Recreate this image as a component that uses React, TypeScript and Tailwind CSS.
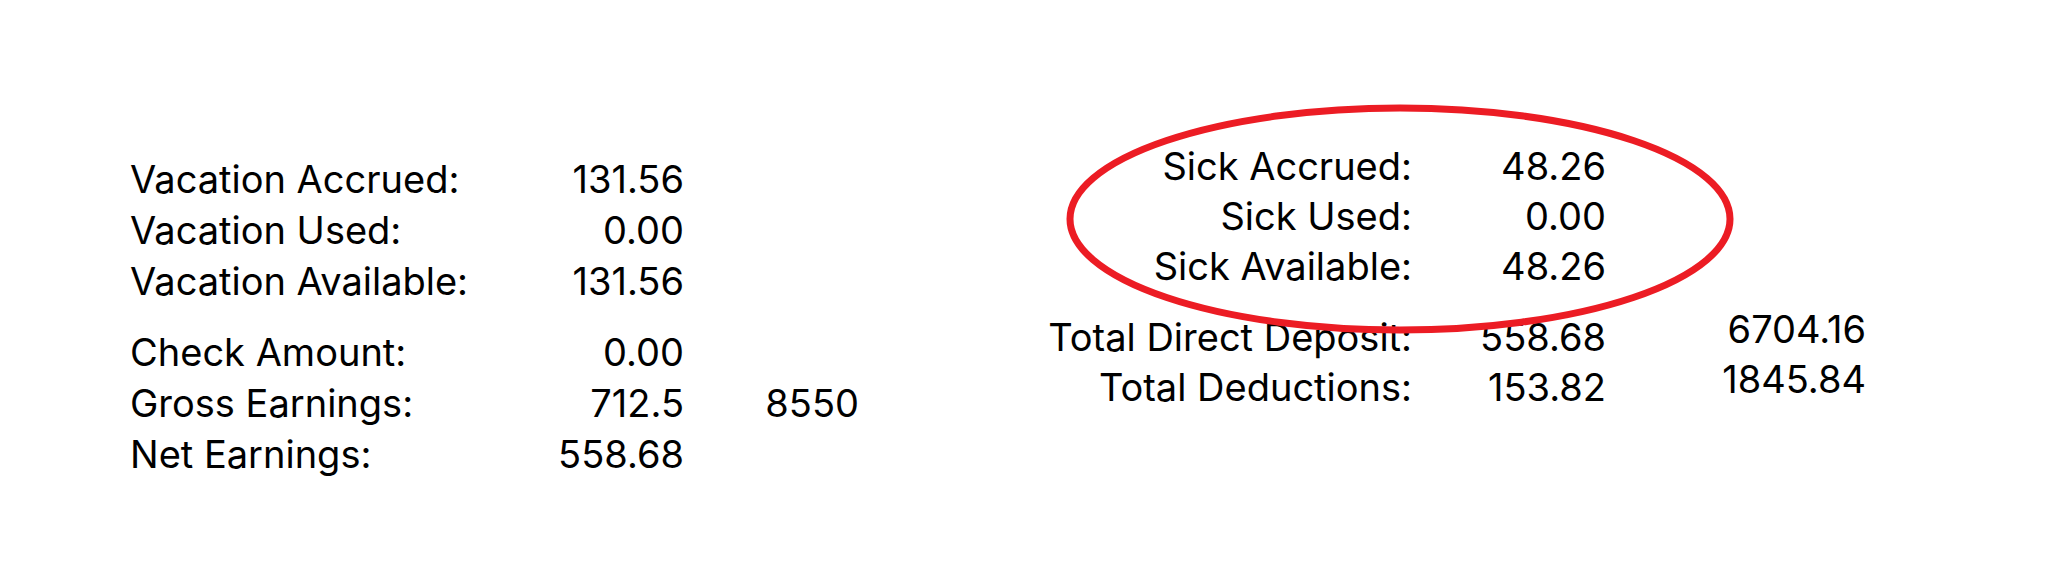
const vacation = [
  { label: 'Vacation Accrued:', value: '131.56' },
  { label: 'Vacation Used:', value: '0.00' },
  { label: 'Vacation Available:', value: '131.56' },
];

const earnings = [
  { label: 'Check Amount:', value: '0.00', ytd: '' },
  { label: 'Gross Earnings:', value: '712.5', ytd: '8550' },
  { label: 'Net Earnings:', value: '558.68', ytd: '' },
];

const sick = [
  { label: 'Sick Accrued:', value: '48.26' },
  { label: 'Sick Used:', value: '0.00' },
  { label: 'Sick Available:', value: '48.26' },
];

const totals = [
  { label: 'Total Direct Deposit:', value: '558.68', ytd: '6704.16' },
  { label: 'Total Deductions:', value: '153.82', ytd: '1845.84' },
];

export default function App() {
  return (
    <div
      className="relative w-[2048px] h-[583px] bg-white text-black text-[38px] overflow-hidden"
      style={{ fontFamily: 'Inter, "Liberation Sans", sans-serif' }}
    >
      <div className="flex">
        {/* left side */}
        <div className="pl-[130px] pt-[154px] flex flex-col leading-[51px]">
          {vacation.map((r) => (
            <div key={r.label} className="flex">
              <div className="w-[370px]">{r.label}</div>
              <div className="w-[184px] text-right">{r.value}</div>
            </div>
          ))}
          <div className="h-[20px]" />
          {earnings.map((r) => (
            <div key={r.label} className="flex">
              <div className="w-[370px]">{r.label}</div>
              <div className="w-[184px] text-right">{r.value}</div>
              <div className="w-[175px] text-right">{r.ytd}</div>
            </div>
          ))}
        </div>

        {/* right side */}
        <div className="ml-[171px] pt-[141px] flex flex-col leading-[50px]">
          {sick.map((r) => (
            <div key={r.label} className="flex">
              <div className="w-[382px] text-right">{r.label}</div>
              <div className="w-[194px] text-right">{r.value}</div>
            </div>
          ))}
          <div className="h-[21px]" />
          {totals.map((r) => (
            <div key={r.label} className="flex">
              <div className="w-[382px] text-right">{r.label}</div>
              <div className="w-[194px] text-right">{r.value}</div>
              <div className="w-[260px] text-right -mt-[8px]">{r.ytd}</div>
            </div>
          ))}
        </div>
      </div>

      {/* hand-drawn circle around sick balances */}
      <svg className="absolute left-0 top-0 pointer-events-none" width="2048" height="583">
        <ellipse cx="1400" cy="219" rx="330" ry="111" fill="none" stroke="#ec1c24" strokeWidth="7" />
      </svg>
    </div>
  );
}
